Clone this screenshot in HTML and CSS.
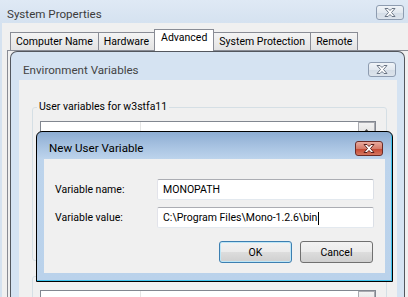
FILE: index.html
```html
<!DOCTYPE html>
<html lang="en">
<head>
  <meta charset="UTF-8">
  <meta name="viewport" content="width=device-width, initial-scale=1.0">
  <title>New User Variable</title>
  <link rel="stylesheet" href="styles.css">
</head>
<body>
  <div class="win sys">
    <div class="titlebar">
      <span class="title">System Properties</span>
      <span class="close">
        <svg width="12" height="9" viewBox="0 0 12 9"><path d="M1 .5H4L6 2.5 8 .5H11L7.5 4.5 11 8.5H8L6 6.5 4 8.5H1L4.5 4.5Z" fill="#fff" stroke="#6a7585"/></svg>
      </span>
    </div>
    <div class="sys-body">
      <div class="tabs">
        <div class="tab">Computer Name</div>
        <div class="tab">Hardware</div>
        <div class="tab selected">Advanced</div>
        <div class="tab">System Protection</div>
        <div class="tab">Remote</div>
      </div>
      <div class="tab-panel"></div>
    </div>
  </div>

  <div class="win env">
    <div class="titlebar">
      <span class="title">Environment Variables</span>
      <span class="close">
        <svg width="12" height="9" viewBox="0 0 12 9"><path d="M1 .5H4L6 2.5 8 .5H11L7.5 4.5 11 8.5H8L6 6.5 4 8.5H1L4.5 4.5Z" fill="#fff" stroke="#6a7585"/></svg>
      </span>
    </div>
    <div class="env-body">
      <fieldset class="group user-group">
        <legend>User variables for w3stfa11</legend>
        <div class="list">
          <div class="list-main">
            <div class="list-head">
              <div class="col col-var">Variable</div>
              <div class="col">Value</div>
            </div>
          </div>
          <div class="scroll">
            <div class="scroll-up">
              <svg width="7" height="4" viewBox="0 0 7 4"><path d="M0 4L3.5 0 7 4Z" fill="#4d4d4d"/></svg>
            </div>
          </div>
        </div>
      </fieldset>
      <fieldset class="group">
        <legend>System variables</legend>
        <div class="list">
          <div class="list-main">
            <div class="list-head">
              <div class="col col-var"></div>
              <div class="col"></div>
            </div>
          </div>
          <div class="scroll">
            <div class="scroll-up"></div>
          </div>
        </div>
      </fieldset>
    </div>
  </div>

  <div class="win dlg">
    <div class="titlebar">
      <span class="title">New User Variable</span>
      <span class="close close-red">
        <svg width="12" height="9" viewBox="0 0 12 9"><path d="M1 .5H4L6 2.5 8 .5H11L7.5 4.5 11 8.5H8L6 6.5 4 8.5H1L4.5 4.5Z" fill="#fff" stroke="#5a1f19"/></svg>
      </span>
    </div>
    <div class="dlg-client">
      <div class="field">
        <label>Variable name:</label>
        <div class="textbox">MONOPATH</div>
      </div>
      <div class="field">
        <label>Variable value:</label>
        <div class="textbox">C:\Program Files\Mono-1.2.6\bin<span class="caret"></span></div>
      </div>
      <div class="actions">
        <button class="btn default">OK</button>
        <button class="btn">Cancel</button>
      </div>
    </div>
  </div>
</body>
</html>
```

FILE: styles.css
```css
* {
  box-sizing: border-box;
}
body {
  margin: 0;
  width: 408px;
  height: 297px;
  overflow: hidden;
  position: relative;
  background: #f0f0f0;
  font-family: Roboto, "Liberation Sans", Arial, sans-serif;
  font-size: 10.5px;
  color: #000;
}

/* windows */
.win {
  position: absolute;
  display: flex;
  flex-direction: column;
}
.titlebar {
  flex: none;
  display: flex;
  justify-content: space-between;
  align-items: flex-start;
}
.title {
  font-size: 11.6px;
  line-height: 16px;
  white-space: nowrap;
}
.close {
  width: 28px;
  height: 15px;
  border: 1px solid #8e9cb0;
  border-radius: 3px;
  display: flex;
  align-items: center;
  justify-content: center;
  background: linear-gradient(#f0f4f8, #e2e8ef 50%, #d3dce6 51%, #dde4ec);
}
.close svg {
  display: block;
}
.close-red {
  border-color: #6b2b26;
  background: linear-gradient(#e8ab9f, #d67d6b 50%, #c4452f 51%, #d5775f);
}

/* System Properties */
.sys {
  left: 0;
  top: 0;
  width: 420px;
  height: 297px;
  padding-left: 2px;
  background: linear-gradient(#dfe9f5, #d5e2f0 23px, #d5e2f0);
}
.sys > .titlebar {
  height: 23px;
  padding: 5px 16px 0 5px;
}
.sys .title {
  color: #3b3b3b;
  margin-top: 1px;
}
.sys-body {
  flex: 1;
  background: #f0f0f0;
  padding: 6px 0 0 8px;
}
.tabs {
  display: flex;
  align-items: flex-end;
  height: 21px;
  position: relative;
  z-index: 1;
}
.tab {
  height: 18px;
  padding: 1px 5px 0;
  line-height: 16px;
  border: 1px solid #898c95;
  border-bottom: 0;
  margin-right: -1px;
  background: linear-gradient(#f4f4f4, #e3e3e3);
  white-space: nowrap;
}
.tab.selected {
  height: 22px;
  margin-bottom: -1px;
  padding: 0 6px 6px;
  line-height: 15px;
  background: #fff;
}
.tab-panel {
  height: 270px;
  margin-left: -3px;
  border-top: 1px solid #898c95;
  border-left: 1px solid #898c95;
}

/* Environment Variables */
.env {
  left: 10px;
  top: 51px;
  width: 395px;
  height: 246px;
  border: 1px solid #53575e;
  border-bottom: 0;
  border-radius: 7px 7px 0 0;
  padding: 0 7px 0 8px;
  background: #d5e3f2;
  overflow: hidden;
}
.env > .titlebar {
  height: 28px;
  padding: 10px 1px 0 4px;
}
.env .title {
  color: #444;
}
.env-body {
  flex: 1;
  background: #f0f0f0;
  padding: 20px 10px 0 13px;
}
.group {
  margin: 0;
  min-width: 0;
  padding: 7px 10px 8px 7px;
  border: 1px solid #d5dfe5;
  border-radius: 3px;
}
.user-group {
  padding-bottom: 39px;
}
.group + .group {
  margin-top: 8px;
}
.group legend {
  padding: 0 2px;
  margin-left: -3px;
  line-height: 14px;
}
.list {
  display: flex;
  height: 100px;
  background: #fff;
  border: 1px solid #828790;
}
.list-main {
  flex: 1;
}
.list-head {
  display: flex;
  height: 24px;
  border-bottom: 1px solid #e5e5e5;
}
.col {
  padding: 5px 0 0 5px;
  line-height: 18px;
}
.col-var {
  width: 100px;
  border-right: 1px solid #e5e5e5;
}
.scroll {
  width: 17px;
  background: #eaeaea;
}
.scroll-up {
  height: 17px;
  border: 1px solid #a9aab0;
  background: linear-gradient(#f2f2f2, #dcdcdc);
  display: flex;
  align-items: center;
  justify-content: center;
}

/* New User Variable */
.dlg {
  left: 36px;
  top: 131px;
  width: 357px;
  height: 151px;
  border: 1px solid #000;
  border-radius: 6px 6px 0 0;
  padding: 0 7px 8px;
  background: linear-gradient(#8dadd2, #a7c2e1 14px, #bdd4ec 27px, #bad2eb);
  box-shadow: inset -1px -1px 0 #3fc3ec;
}
.dlg > .titlebar {
  height: 27px;
  padding: 8px 2px 0 5px;
}
.dlg .close {
  margin-top: 1px;
}
.dlg-client {
  flex: 1;
  background: #f0f0f0;
  padding: 20px 11px 0;
}
.field {
  display: flex;
  align-items: center;
}
.field + .field {
  margin-top: 7px;
}
.field label {
  width: 102px;
  flex: none;
}
.textbox {
  width: 217px;
  height: 21px;
  border: 1px solid #abadb3;
  border-color: #abadb3 #dbdfe6 #e3e9ef #e2e3ea;
  border-radius: 2px;
  background: #fff;
  padding: 0 5px;
  line-height: 19px;
  white-space: nowrap;
}
.caret {
  display: inline-block;
  width: 1px;
  height: 13px;
  margin-left: 1px;
  background: #000;
  vertical-align: middle;
}
.actions {
  display: flex;
  justify-content: flex-end;
  gap: 8px;
  margin-top: 13px;
  padding-right: 1px;
}
.btn {
  width: 73px;
  height: 22px;
  padding: 0;
  font: inherit;
  color: #000;
  border: 1px solid #707070;
  border-radius: 3px;
  background: linear-gradient(#f2f2f2, #ebebeb 50%, #dddddd 51%, #cfcfcf);
}
.btn.default {
  border-color: #3c7fb1;
  box-shadow: inset 0 0 0 1px #bde6f7;
}
```
